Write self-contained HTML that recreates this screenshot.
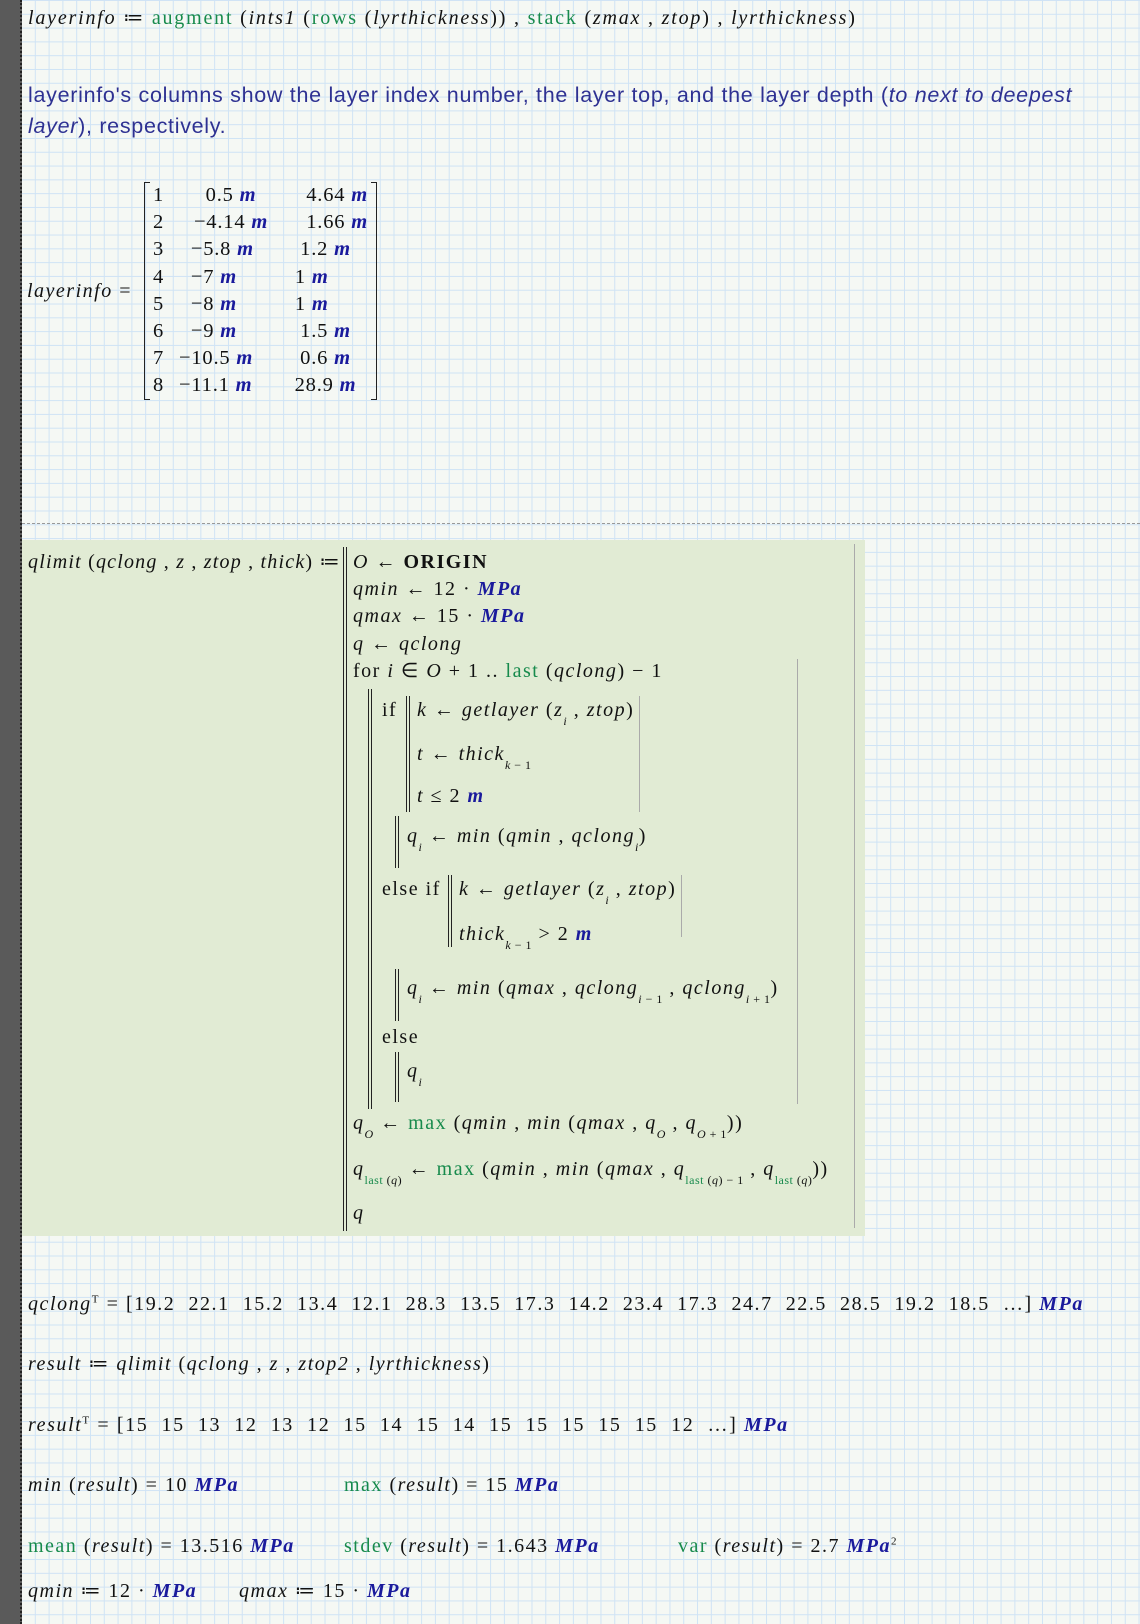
<!DOCTYPE html>
<html><head><meta charset="utf-8"><style>
body{margin:0;width:1140px;height:1624px;overflow:hidden;position:relative;background-color:#f5f8f4;
background-image:linear-gradient(to right,#cfe3f5 1px,transparent 1px),linear-gradient(to bottom,#cfe3f5 1px,transparent 1px);
background-size:13.8px 13.8px;background-position:21px 0;font-family:"Liberation Serif",serif;font-size:20px;color:#111}
#bar{position:absolute;left:0;top:0;width:20px;height:1624px;background:#5a5a5a;border-right:2px dotted #222}
.l{position:absolute;white-space:nowrap;line-height:24px;letter-spacing:1.5px}
i{font-style:italic}
.g{color:#178a4c}
.u{color:#1a1a9c;font-weight:bold;font-style:italic}
sub{font-size:12px;vertical-align:-9px;letter-spacing:0.5px;line-height:0}
sup{font-size:11px;line-height:0}
.p{position:absolute;left:28px;top:80px;width:1075px;font-family:"Liberation Sans",sans-serif;font-size:21.5px;letter-spacing:0.7px;color:#2e3192;line-height:31px}
.box{position:absolute;left:22px;top:540px;width:843px;height:696px;background:#e1ebd4}
.vb{position:absolute;border-left:1.5px solid #222;border-right:1.5px solid #222;width:2px}
.sb{position:absolute;border-left:1px solid #aaa}
.brk{position:absolute;border:1.5px solid #222;width:5px}
.m td{padding:0;height:27.2px;line-height:27px}
</style></head><body>
<div id="bar"></div>
<div class="l" style="left:28px;top:6px;letter-spacing:1.8px"><i>layerinfo</i> ≔ <span class="g">augment</span> (<i>ints1</i> (<span class="g">rows</span> (<i>lyrthickness</i>)) , <span class="g">stack</span> (<i>zmax</i> , <i>ztop</i>) , <i>lyrthickness</i>)</div>
<div class="p">layerinfo's columns show the layer index number, the layer top, and the layer depth (<i>to next to deepest layer</i>), respectively.</div>

<div class="l" style="left:27px;top:279px"><i>layerinfo</i> =</div>
<div class="brk" style="left:144px;top:182px;height:216px;border-right:none"></div>
<div class="brk" style="left:371px;top:182px;height:216px;border-left:none"></div>
<table class="m" style="position:absolute;left:153px;top:182px;border-collapse:collapse;font-size:20.5px;letter-spacing:0.8px">
<tr><td style="width:26px">1</td><td style="width:104px;text-align:center">0.5 <span class="u">m</span></td><td style="width:85px;text-align:right">4.64 <span class="u">m</span></td></tr>
<tr><td>2</td><td style="text-align:center">−4.14 <span class="u">m</span></td><td style="text-align:right">1.66 <span class="u">m</span></td></tr>
<tr><td>3</td><td>&nbsp;&nbsp;−5.8 <span class="u">m</span></td><td style="text-align:center">1.2 <span class="u">m</span></td></tr>
<tr><td>4</td><td>&nbsp;&nbsp;−7 <span class="u">m</span></td><td>&nbsp;&nbsp;1 <span class="u">m</span></td></tr>
<tr><td>5</td><td>&nbsp;&nbsp;−8 <span class="u">m</span></td><td>&nbsp;&nbsp;1 <span class="u">m</span></td></tr>
<tr><td>6</td><td>&nbsp;&nbsp;−9 <span class="u">m</span></td><td style="text-align:center">1.5 <span class="u">m</span></td></tr>
<tr><td>7</td><td>−10.5 <span class="u">m</span></td><td style="text-align:center">0.6 <span class="u">m</span></td></tr>
<tr><td>8</td><td>−11.1 <span class="u">m</span></td><td style="text-align:center">28.9 <span class="u">m</span></td></tr>
</table>

<div style="position:absolute;left:22px;top:523px;width:1118px;border-top:1px dashed #999"></div>
<div class="box"></div>
<div class="l" style="left:28px;top:550px;letter-spacing:1.2px"><i>qlimit</i> (<i>qclong</i> , <i>z</i> , <i>ztop</i> , <i>thick</i>) ≔</div>
<div class="vb" style="left:343px;top:547px;height:684px"></div>
<div class="sb" style="left:854px;top:544px;height:684px"></div>
<div class="l" style="left:353px;top:550px"><i>O</i> ← <b>ORIGIN</b></div>
<div class="l" style="left:353px;top:577px"><i>qmin</i> ← 12 · <span class="u">MPa</span></div>
<div class="l" style="left:353px;top:604px"><i>qmax</i> ← 15 · <span class="u">MPa</span></div>
<div class="l" style="left:353px;top:632px"><i>q</i> ← <i>qclong</i></div>
<div class="l" style="left:353px;top:659px">for <i>i</i> ∈ <i>O</i> + 1 .. <span class="g">last</span> (<i>qclong</i>) − 1</div>
<div class="vb" style="left:368px;top:689px;height:420px"></div>
<div class="sb" style="left:797px;top:659px;height:445px"></div>
<div class="l" style="left:382px;top:698px">if</div>
<div class="vb" style="left:406px;top:696px;height:116px"></div>
<div class="sb" style="left:639px;top:696px;height:116px"></div>
<div class="l" style="left:417px;top:698px"><i>k</i> ← <i>getlayer</i> (<i>z</i><sub><i>i</i></sub> , <i>ztop</i>)</div>
<div class="l" style="left:417px;top:742px"><i>t</i> ← <i>thick</i><sub><i>k</i> − 1</sub></div>
<div class="l" style="left:417px;top:784px"><i>t</i> ≤ 2 <span class="u">m</span></div>
<div class="vb" style="left:395px;top:816px;height:52px"></div>
<div class="l" style="left:407px;top:824px"><i>q</i><sub><i>i</i></sub> ← <i>min</i> (<i>qmin</i> , <i>qclong</i><sub><i>i</i></sub>)</div>
<div class="l" style="left:382px;top:877px">else if</div>
<div class="vb" style="left:448px;top:875px;height:72px"></div>
<div class="sb" style="left:681px;top:875px;height:62px"></div>
<div class="l" style="left:459px;top:877px"><i>k</i> ← <i>getlayer</i> (<i>z</i><sub><i>i</i></sub> , <i>ztop</i>)</div>
<div class="l" style="left:459px;top:922px"><i>thick</i><sub><i>k</i> − 1</sub> &gt; 2 <span class="u">m</span></div>
<div class="vb" style="left:395px;top:969px;height:52px"></div>
<div class="l" style="left:407px;top:976px"><i>q</i><sub><i>i</i></sub> ← <i>min</i> (<i>qmax</i> , <i>qclong</i><sub><i>i</i> − 1</sub> , <i>qclong</i><sub><i>i</i> + 1</sub>)</div>
<div class="l" style="left:382px;top:1025px">else</div>
<div class="vb" style="left:395px;top:1052px;height:50px"></div>
<div class="l" style="left:407px;top:1059px"><i>q</i><sub><i>i</i></sub></div>
<div class="l" style="left:353px;top:1111px"><i>q</i><sub><i>O</i></sub> ← <span class="g">max</span> (<i>qmin</i> , <i>min</i> (<i>qmax</i> , <i>q</i><sub><i>O</i></sub> , <i>q</i><sub><i>O</i> + 1</sub>))</div>
<div class="l" style="left:353px;top:1157px"><i>q</i><sub><span class="g">last</span> (<i>q</i>)</sub> ← <span class="g">max</span> (<i>qmin</i> , <i>min</i> (<i>qmax</i> , <i>q</i><sub><span class="g">last</span> (<i>q</i>) − 1</sub> , <i>q</i><sub><span class="g">last</span> (<i>q</i>)</sub>))</div>
<div class="l" style="left:353px;top:1201px"><i>q</i></div>

<div class="l" style="left:28px;top:1292px;letter-spacing:1.55px"><i>qclong</i><sup>T</sup> = [19.2&nbsp; 22.1&nbsp; 15.2&nbsp; 13.4&nbsp; 12.1&nbsp; 28.3&nbsp; 13.5&nbsp; 17.3&nbsp; 14.2&nbsp; 23.4&nbsp; 17.3&nbsp; 24.7&nbsp; 22.5&nbsp; 28.5&nbsp; 19.2&nbsp; 18.5&nbsp; …] <span class="u">MPa</span></div>
<div class="l" style="left:28px;top:1352px"><i>result</i> ≔ <i>qlimit</i> (<i>qclong</i> , <i>z</i> , <i>ztop2</i> , <i>lyrthickness</i>)</div>
<div class="l" style="left:28px;top:1413px;letter-spacing:1.6px"><i>result</i><sup>T</sup> = [15&nbsp; 15&nbsp; 13&nbsp; 12&nbsp; 13&nbsp; 12&nbsp; 15&nbsp; 14&nbsp; 15&nbsp; 14&nbsp; 15&nbsp; 15&nbsp; 15&nbsp; 15&nbsp; 15&nbsp; 12&nbsp; …] <span class="u">MPa</span></div>
<div class="l" style="left:28px;top:1473px"><i>min</i> (<i>result</i>) = 10 <span class="u">MPa</span></div>
<div class="l" style="left:344px;top:1473px"><span class="g">max</span> (<i>result</i>) = 15 <span class="u">MPa</span></div>
<div class="l" style="left:28px;top:1534px"><span class="g">mean</span> (<i>result</i>) = 13.516 <span class="u">MPa</span></div>
<div class="l" style="left:344px;top:1534px"><span class="g">stdev</span> (<i>result</i>) = 1.643 <span class="u">MPa</span></div>
<div class="l" style="left:678px;top:1534px"><span class="g">var</span> (<i>result</i>) = 2.7 <span class="u">MPa</span><sup>2</sup></div>
<div class="l" style="left:28px;top:1579px"><i>qmin</i> ≔ 12 · <span class="u">MPa</span></div>
<div class="l" style="left:239px;top:1579px"><i>qmax</i> ≔ 15 · <span class="u">MPa</span></div>
</body></html>
